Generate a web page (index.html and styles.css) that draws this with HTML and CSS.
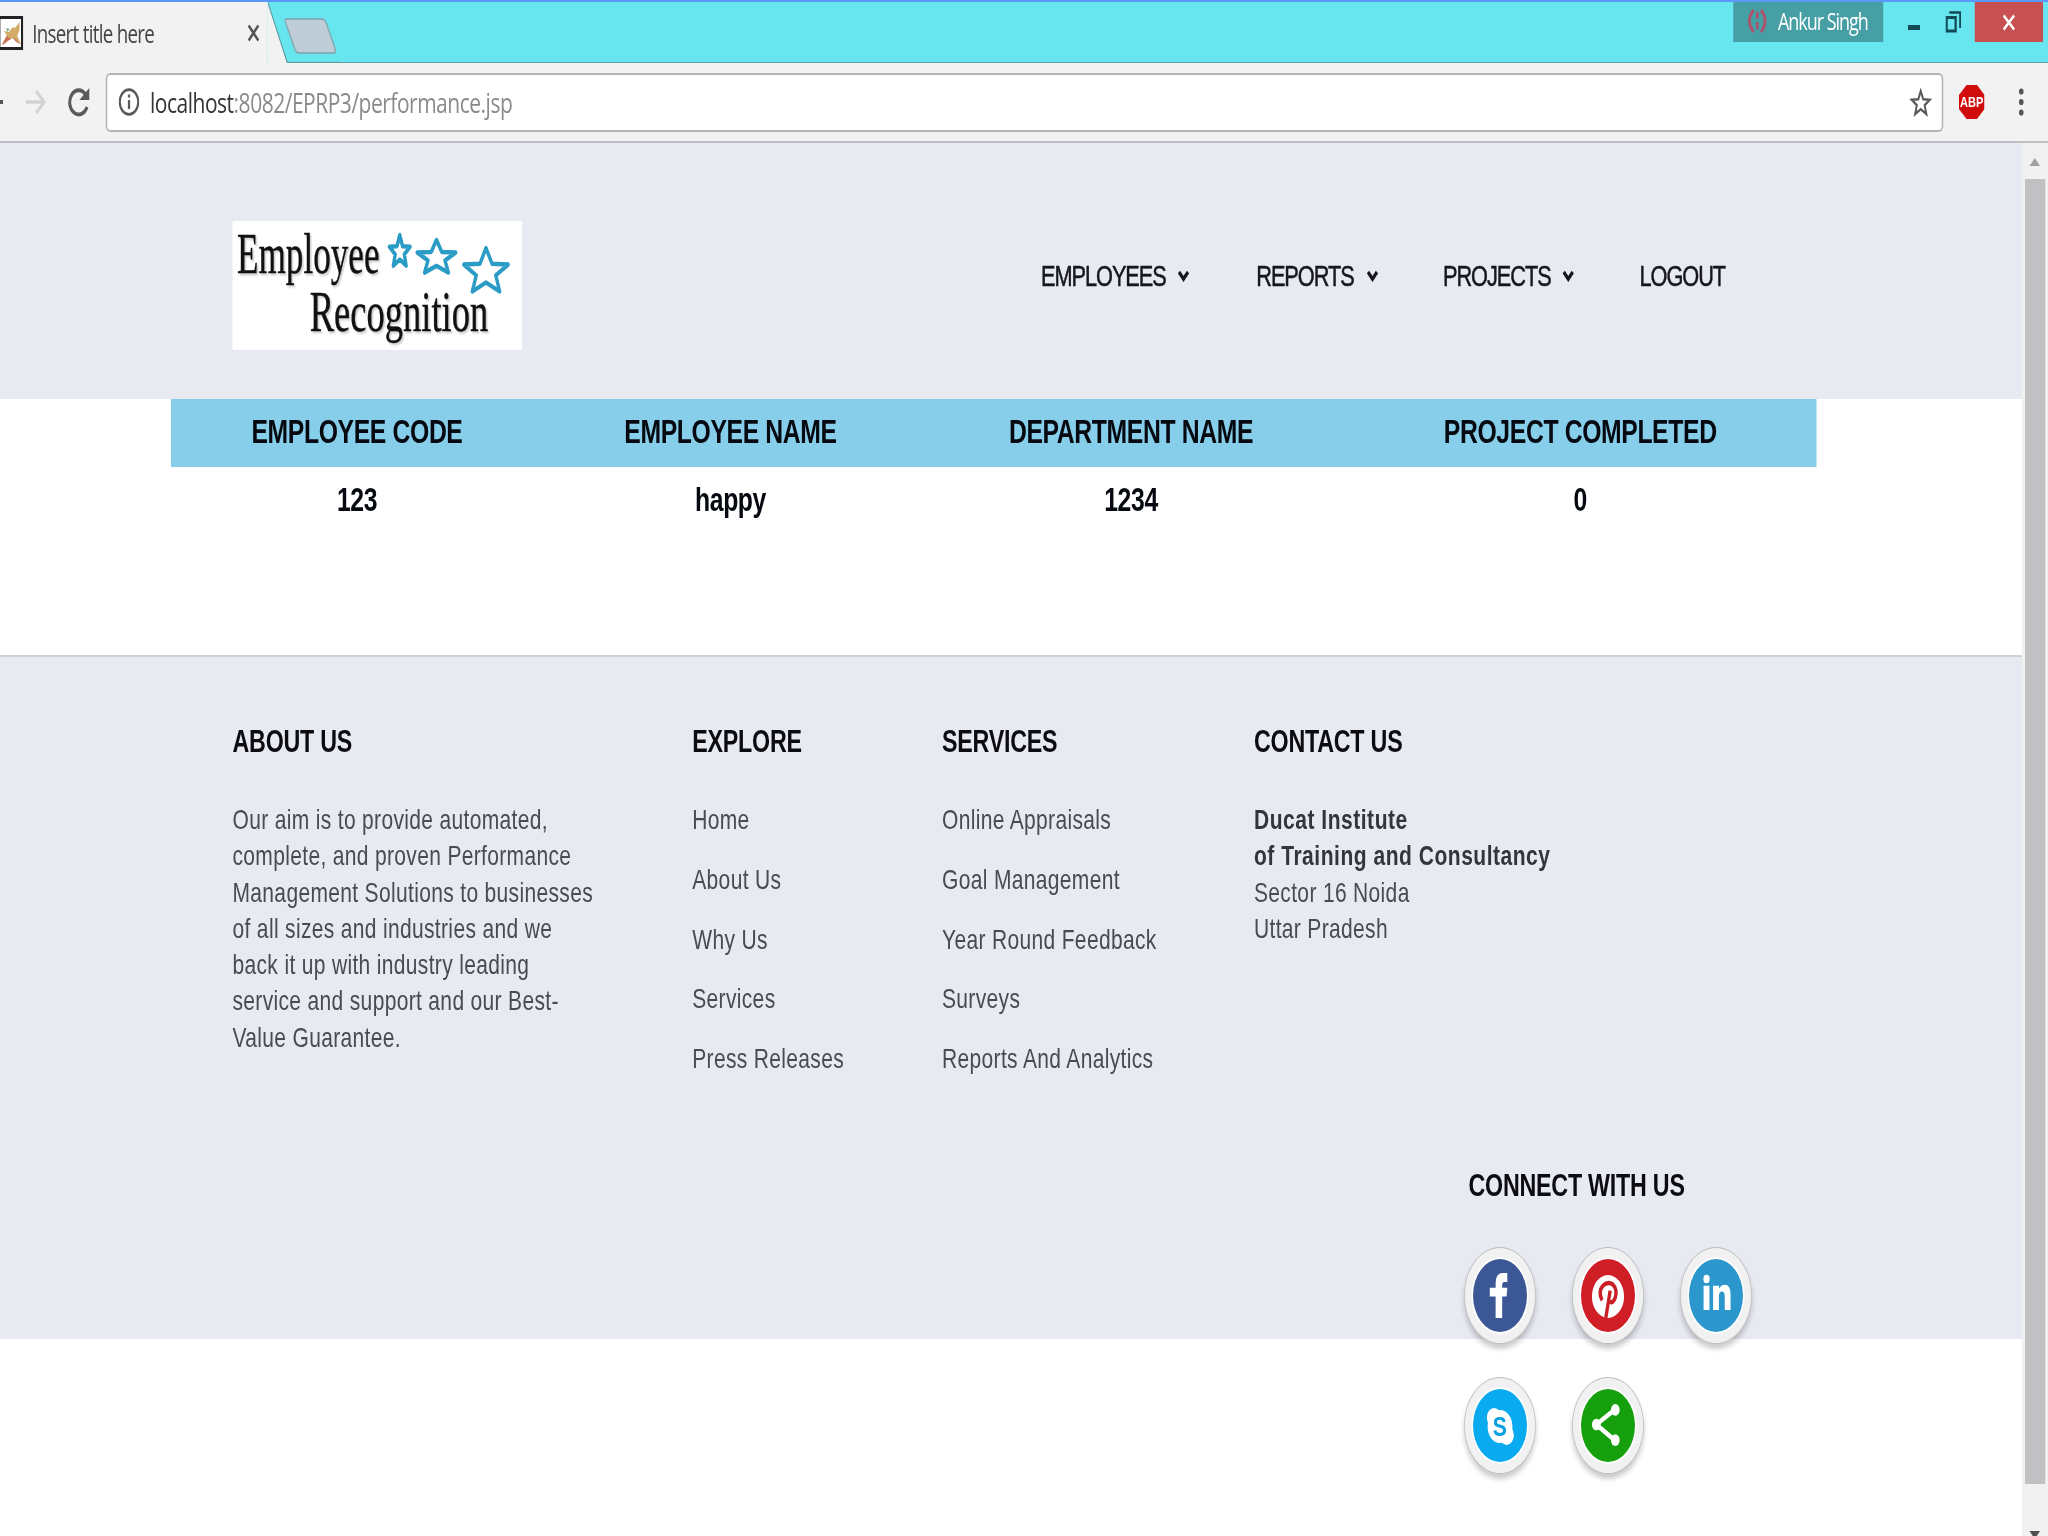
FILE: index.html
```html
<!DOCTYPE html>
<html lang="en">
<head>
    <meta charset="UTF-8">
    <title>Insert title here</title>
    <link rel="stylesheet" href="styles.css">
</head>
<body>
<div class="screen">
    <!-- browser -->
    <div class="tabstrip">
        <div class="tab">
            <svg class="favicon" width="31" height="34" viewBox="0 0 31 34"><rect x="-1" y="1.5" width="30.5" height="31" fill="#fff" stroke="#222" stroke-width="3"/><path d="M3 29L9 19L5 15L12 16L17 11L20 12L26 6L26 14L23 20L28 28L18 23L13 22L8 27Z" fill="#d3ac68"/><path d="M2 29L9 20L15 23L8 26ZM18 21L28 29L20 25Z" fill="#c8705a"/><path d="M8 12L13 13L10 16Z" fill="#7aa894"/></svg>
            <span class="tab-title">Insert title here</span>
            <svg class="tab-close" width="16" height="18" viewBox="0 0 16 18"><path d="M1.5 1.5L14.5 16.5M14.5 1.5L1.5 16.5" stroke="#555" stroke-width="3"/></svg>
        </div>
        <svg class="tab-edge" width="96" height="62" viewBox="0 0 96 62"><path d="M0 1L26 62H0Z" fill="#f2f2f3"/><path d="M0 1L26 61.5H96" fill="none" stroke="#5f9ea3" stroke-width="1.5"/><path d="M25 18H72Q76 18 78 22L90 48Q91 52 88 52H42Q38 52 36 48L24 22Q22 18 25 18Z" fill="#bfcdd6" stroke="#83adb8" stroke-width="2"/></svg>
        <div class="win">
            <div class="profile">
                <svg width="26" height="24" viewBox="0 0 26 24"><path d="M8 1Q-3 12 8 23M18 1Q29 12 18 23M13 3V10M13 13V20" fill="none" stroke="#b0506a" stroke-width="3.4"/></svg>
                <span class="profile-name">Ankur Singh</span>
            </div>
            <div class="minimize"></div>
            <svg class="restore" width="21" height="22" viewBox="0 0 21 22"><path d="M5 1.5H19.5V17" fill="none" stroke="#134a55" stroke-width="2.5"/><rect x="1.5" y="6.5" width="12" height="13.5" fill="none" stroke="#134a55" stroke-width="3"/></svg>
            <div class="close">
                <svg width="17" height="17" viewBox="0 0 17 17"><path d="M1.5 1.5L15.5 15.5M15.5 1.5L1.5 15.5" stroke="#fff" stroke-width="3"/></svg>
            </div>
        </div>
    </div>
    <div class="toolbar">
        <div class="back"></div>
        <svg class="forward" width="28" height="28" viewBox="0 0 28 28"><path d="M0 14H25M14 3L25 14L14 25" fill="none" stroke="#d3d3d5" stroke-width="3.4"/></svg>
        <svg class="reload" width="30" height="30" viewBox="0 0 30 30"><path d="M24 7.5A12 12 0 1 0 26 20" fill="none" stroke="#5a5a5a" stroke-width="4"/><path d="M29 1V13H16Z" fill="#5a5a5a"/></svg>
        <div class="address">
            <svg width="28" height="28" viewBox="0 0 28 28"><circle cx="14" cy="14" r="12.3" fill="none" stroke="#5a5a5a" stroke-width="2.8"/><path d="M14 12V21M14 6.5V9.5" stroke="#5a5a5a" stroke-width="3"/></svg>
            <span class="url"><span class="host">localhost</span>:8082/EPRP3/performance.jsp</span>
            <svg class="star" width="30" height="29" viewBox="0 0 30 29"><path d="M15 3L18.3 11.3L27 11.8L20.2 17.3L22.5 26L15 21.2L7.5 26L9.8 17.3L3 11.8L11.7 11.3Z" fill="none" stroke="#5a5a5a" stroke-width="2.6"/></svg>
        </div>
        <svg class="abp" width="34" height="34" viewBox="0 0 34 34"><path d="M10 0H24L34 10V24L24 34H10L0 24V10Z" fill="#d00c0c"/><text x="17" y="22" textLength="31" lengthAdjust="spacingAndGlyphs" class="abp-text">ABP</text></svg>
        <svg class="dots" width="8" height="28" viewBox="0 0 8 28"><circle cx="4" cy="3.5" r="3.1"/><circle cx="4" cy="14" r="3.1"/><circle cx="4" cy="24.5" r="3.1"/></svg>
    </div>

    <div class="view">
        <div class="page">
            <div class="header">
                <svg class="logo" width="386" height="129" viewBox="0 0 386 129">
                    <defs><path id="s" d="M0 -1L.26 -.34L.951 -.309L.42 .14L.588 .809L0 .44L-.588 .809L-.42 .14L-.951 -.309L-.26 -.34Z"/></defs>
                    <rect width="386" height="129" fill="#fff"/>
                    <g class="logo-text">
                        <text x="6" y="52" font-size="58" textLength="190" lengthAdjust="spacingAndGlyphs">Employee</text>
                        <text x="103" y="110" font-size="57" textLength="238" lengthAdjust="spacingAndGlyphs">Recognition</text>
                    </g>
                    <g class="logo-stars">
                        <use href="#s" transform="translate(223 31) scale(14.5 17)"/>
                        <use href="#s" transform="translate(272 37) scale(27 18)"/>
                        <use href="#s" transform="translate(338 51) scale(31 24)"/>
                    </g>
                </svg>
                <ul class="nav">
                    <li class="nav-emp">EMPLOYEES <svg width="16" height="12" viewBox="0 0 16 12"><path d="M2 2L8 9L14 2" /></svg></li>
                    <li class="nav-rep">REPORTS <svg width="16" height="12" viewBox="0 0 16 12"><path d="M2 2L8 9L14 2" /></svg></li>
                    <li class="nav-pro">PROJECTS <svg width="16" height="12" viewBox="0 0 16 12"><path d="M2 2L8 9L14 2" /></svg></li>
                    <li>LOGOUT</li>
                </ul>
            </div>

            <table class="list">
                <colgroup><col class="c1"><col class="c2"><col class="c3"><col class="c4"></colgroup>
                <tr class="list-head">
                    <th>EMPLOYEE CODE</th>
                    <th>EMPLOYEE NAME</th>
                    <th>DEPARTMENT NAME</th>
                    <th>PROJECT COMPLETED</th>
                </tr>
                <tr>
                    <th>123</th>
                    <th>happy</th>
                    <th>1234</th>
                    <th>0</th>
                </tr>
            </table>

            <div class="footer">
                <div class="columns">
                    <div class="about">
                        <h4>ABOUT US</h4>
                        <p>Our aim is to provide automated,<br>complete, and proven Performance<br>Management Solutions to businesses<br>of all sizes and industries and we<br>back it up with industry leading<br>service and support and our Best-<br>Value Guarantee.</p>
                    </div>
                    <div class="explore">
                        <h4>EXPLORE</h4>
                        <ul>
                            <li>Home</li>
                            <li>About Us</li>
                            <li>Why Us</li>
                            <li>Services</li>
                            <li>Press Releases</li>
                        </ul>
                    </div>
                    <div class="services">
                        <h4>SERVICES</h4>
                        <ul>
                            <li>Online Appraisals</li>
                            <li>Goal Management</li>
                            <li>Year Round Feedback</li>
                            <li>Surveys</li>
                            <li>Reports And Analytics</li>
                        </ul>
                    </div>
                    <div class="contact">
                        <h4>CONTACT US</h4>
                        <p><b>Ducat Institute<br>of Training and Consultancy</b><br>Sector 16 Noida<br>Uttar Pradesh</p>
                    </div>
                </div>
                <div class="connect">
                    <h4>CONNECT WITH US</h4>
                    <div class="social">
                        <div class="icon"><svg class="facebook" viewBox="0 0 74 74"><path d="M31 60V38H23V29H31V24Q31 14 41 14H47V23H43Q40 23 40 26V29H47L46 38H40V60Z" fill="#fff"/></svg></div>
                        <div class="icon"><svg class="pinterest" viewBox="0 0 74 74"><circle cx="37" cy="38" r="22" fill="#fff"/><path d="M34 60L40 32M29 42Q23 33 30 27Q37 22 44 26Q50 31 47 39Q43 47 37 42" fill="none" stroke="#cb1f27" stroke-width="4.6"/></svg></div>
                        <div class="icon"><svg class="linkedin" viewBox="0 0 74 74"><path d="M20 27H28V52H20ZM33 27H41V30Q44 26 49 26Q57 26 57 36V52H49V38Q49 33 45 33Q41 33 41 38V52H33Z" fill="#fff"/><circle cx="24" cy="20" r="4.3" fill="#fff"/></svg></div>
                        <div class="icon"><svg class="skype" viewBox="0 0 74 74"><circle cx="37" cy="38" r="17" fill="#fff"/><circle cx="29" cy="29" r="10" fill="#fff"/><circle cx="46" cy="47" r="10" fill="#fff"/><text x="37" y="48" class="skype-s">S</text></svg></div>
                        <div class="icon"><svg class="share" viewBox="0 0 74 74"><path d="M46 21L21 36L46 52" fill="none" stroke="#fff" stroke-width="5"/><circle cx="47" cy="21" r="6" fill="#fff"/><circle cx="21" cy="36" r="6" fill="#fff"/><circle cx="47" cy="52" r="6" fill="#fff"/></svg></div>
                    </div>
                </div>
            </div>
        </div>
        <div class="scrollbar">
            <div class="arrow-up"></div>
            <div class="thumb"></div>
            <div class="arrow-down"></div>
        </div>
    </div>
</div>
</body>
</html>
```

FILE: styles.css
```css
*{
    margin: 0;
    padding: 0;
    box-sizing: border-box;
    list-style: none;
}
html,body{
    width: 2048px;
    height: 1536px;
    overflow: hidden;
    background-color: #fff;
}
svg{
    display: block;
    flex: none;
}
/* everything is drawn narrow, 3/4 of its width */
.screen{
    width: calc(2048px / .75);
    height: 1536px;
    overflow: hidden;
    transform: scaleX(.75);
    transform-origin: 0 0;
    font-family: "Liberation Sans", Arial, sans-serif;
    display: flex;
    flex-direction: column;
}
/* tabs */
.tabstrip{
    height: 63px;
    flex: none;
    display: flex;
    background-color: #68e6f0;
    border-top: 2px solid #5c97fb;
    border-bottom: 1px solid #5f9ea3;
}
.tab{
    width: 357px;
    height: 61px;
    background-color: #f2f2f3;
    display: flex;
    align-items: center;
}
.tab-title{
    font: 25px "Open Sans", sans-serif;
    letter-spacing: -.95px;
    color: #444;
    margin-left: 12px;
    width: 287px;
    white-space: nowrap;
}
.tab-edge{
    height: 62px;
    margin-top: -1px;
}
.win{
    margin-left: auto;
    display: flex;
    height: 40px;
}
.profile{
    width: 200px;
    background-color: #469fa4;
    display: flex;
    align-items: center;
    padding: 0 0 3px 19px;
    font: 24px "Open Sans", sans-serif;
    color: #fff;
}
.profile-name{
    margin-left: 15px;
    letter-spacing: -1.4px;
    white-space: nowrap;
}
.minimize{
    width: 16px;
    height: 5px;
    margin: 23px 0 0 33px;
    background-color: #134a55;
}
.restore{
    margin: 9px 0 0 34px;
}
.close{
    width: 91px;
    margin: 0 7px 0 18px;
    background-color: #c75052;
    display: flex;
    align-items: center;
    justify-content: center;
}
/* toolbar */
.toolbar{
    height: 80px;
    flex: none;
    background-color: #f2f2f3;
    border-bottom: 2px solid #bdbfc3;
    display: flex;
    align-items: center;
}
.back{
    width: 4px;
    height: 4px;
    background-color: #555;
}
.forward{
    margin-left: 30px;
}
.reload{
    margin-left: 28px;
}
.address{
    width: 2450px;
    height: 59px;
    margin-left: 21px;
    padding: 0 13px 0 15px;
    background-color: #fff;
    border: 2px solid #b3b3b5;
    border-radius: 6px;
    display: flex;
    align-items: center;
}
.url{
    font: 28px "Open Sans", sans-serif;
    letter-spacing: -.65px;
    margin-left: 14px;
    color: #8a8a8a;
}
.host{
    color: #333;
}
.star{
    margin-left: auto;
}
.abp{
    margin-left: 21px;
}
.abp-text{
    font: bold 14px "Liberation Sans", sans-serif;
    fill: #fff;
    text-anchor: middle;
}
.dots{
    margin-left: 45px;
    fill: #555;
}
/* page */
.view{
    flex: 1;
    display: flex;
}
.page{
    width: 2696px;
    background-color: #fff;
}
.header{
    height: 256px;
    background-color: #e8eaf2;
    display: flex;
    align-items: flex-start;
    padding-left: 310px;
}
.logo{
    margin-top: 78px;
    overflow: visible;
}
.logo-text{
    font-family: "Liberation Serif", serif;
    fill: #111;
    stroke: #111;
    stroke-width: .4;
    filter: drop-shadow(2px 2px 1px #ccc);
}
.logo-stars{
    fill: none;
    stroke: #2b9cc6;
    stroke-linejoin: round;
}
.logo-stars use{
    stroke-width: 4.5px;
}
#s{
    vector-effect: non-scaling-stroke;
}
.nav{
    display: flex;
    margin: 113px 0 0 692px;
    font-size: 29px;
    line-height: 40px;
    color: #16161c;
    letter-spacing: -1.4px;
    -webkit-text-stroke: .5px #16161c;
}
.nav li{
    display: flex;
    align-items: center;
    justify-content: space-between;
    white-space: nowrap;
}
.nav path{
    fill: none;
    stroke: #16161c;
    stroke-width: 4;
}
.nav-emp{
    width: 198px;
    margin-right: 89px;
}
.nav-rep{
    width: 163px;
    margin-right: 86px;
}
.nav-pro{
    width: 175px;
    margin-right: 87px;
}
/* table */
.list{
    width: 2194px;
    margin-left: 228px;
    table-layout: fixed;
    border-collapse: collapse;
    font-size: 33px;
    letter-spacing: -.5px;
    color: #06090f;
}
.list th{
    height: 68px;
    padding-bottom: 2px;
}
.list-head{
    background-color: #87ceeb;
}
.c1{ width: 496px; }
.c2{ width: 500px; }
.c3{ width: 568px; }
.c4{ width: 630px; }
/* footer */
.footer{
    height: 684px;
    margin-top: 120px;
    padding: 65px 0 0 310px;
    background-color: #e8eaf2;
    border-top: 2px solid #cfd1d6;
    font-size: 28px;
    line-height: 36.25px;
    letter-spacing: .45px;
    color: #4a4b50;
}
.columns{
    display: flex;
    height: 367px;
}
.footer h4{
    font-size: 31px;
    line-height: 40px;
    letter-spacing: -.3px;
    color: #0b0b10;
}
.footer p{
    margin-top: 40px;
    white-space: nowrap;
}
.footer b{
    color: #34353c;
    letter-spacing: .7px;
}
.footer ul{
    margin-top: 28px;
}
.footer li{
    line-height: 59.8px;
}
.about{
    width: 613px;
}
.explore{
    width: 333px;
}
.services{
    width: 416px;
}
.connect{
    margin: 77px 0 0 1648px;
}
.social{
    width: 440px;
    margin: 41px 0 0 -6px;
    display: flex;
    flex-wrap: wrap;
    gap: 33px 48px;
}
.icon{
    width: 96px;
    height: 97px;
    padding: 9px;
    border: 1px solid #bcbcc0;
    border-radius: 50%;
    background-color: #f2f1f2;
    box-shadow: 0 5px 6px rgba(0,0,0,.2);
}
.icon svg{
    width: 76px;
    height: 77px;
    border: 2px solid #fff;
    border-radius: 50%;
}
.facebook{ background-color: #3b5796; }
.pinterest{ background-color: #d01e26; }
.linkedin{ background-color: #2c97cd; }
.skype{ background-color: #0aaaf0; }
.share{ background-color: #17a00d; }
.skype-s{
    font: bold 29px "Liberation Sans", sans-serif;
    fill: #0a9fe0;
    text-anchor: middle;
}
/* scrollbar */
.scrollbar{
    width: 35px;
    background-color: #f1f1f2;
    display: flex;
    flex-direction: column;
    align-items: center;
}
.arrow-up{
    margin-top: 15px;
    border: 7px solid transparent;
    border-top: 0;
    border-bottom: 8px solid #a0a0a3;
}
.thumb{
    width: 27px;
    height: 1305px;
    margin-top: 13px;
    background-color: #c1c1c3;
}
.arrow-down{
    margin-top: 47px;
    border: 7px solid transparent;
    border-bottom: 0;
    border-top: 8px solid #505050;
}
```
